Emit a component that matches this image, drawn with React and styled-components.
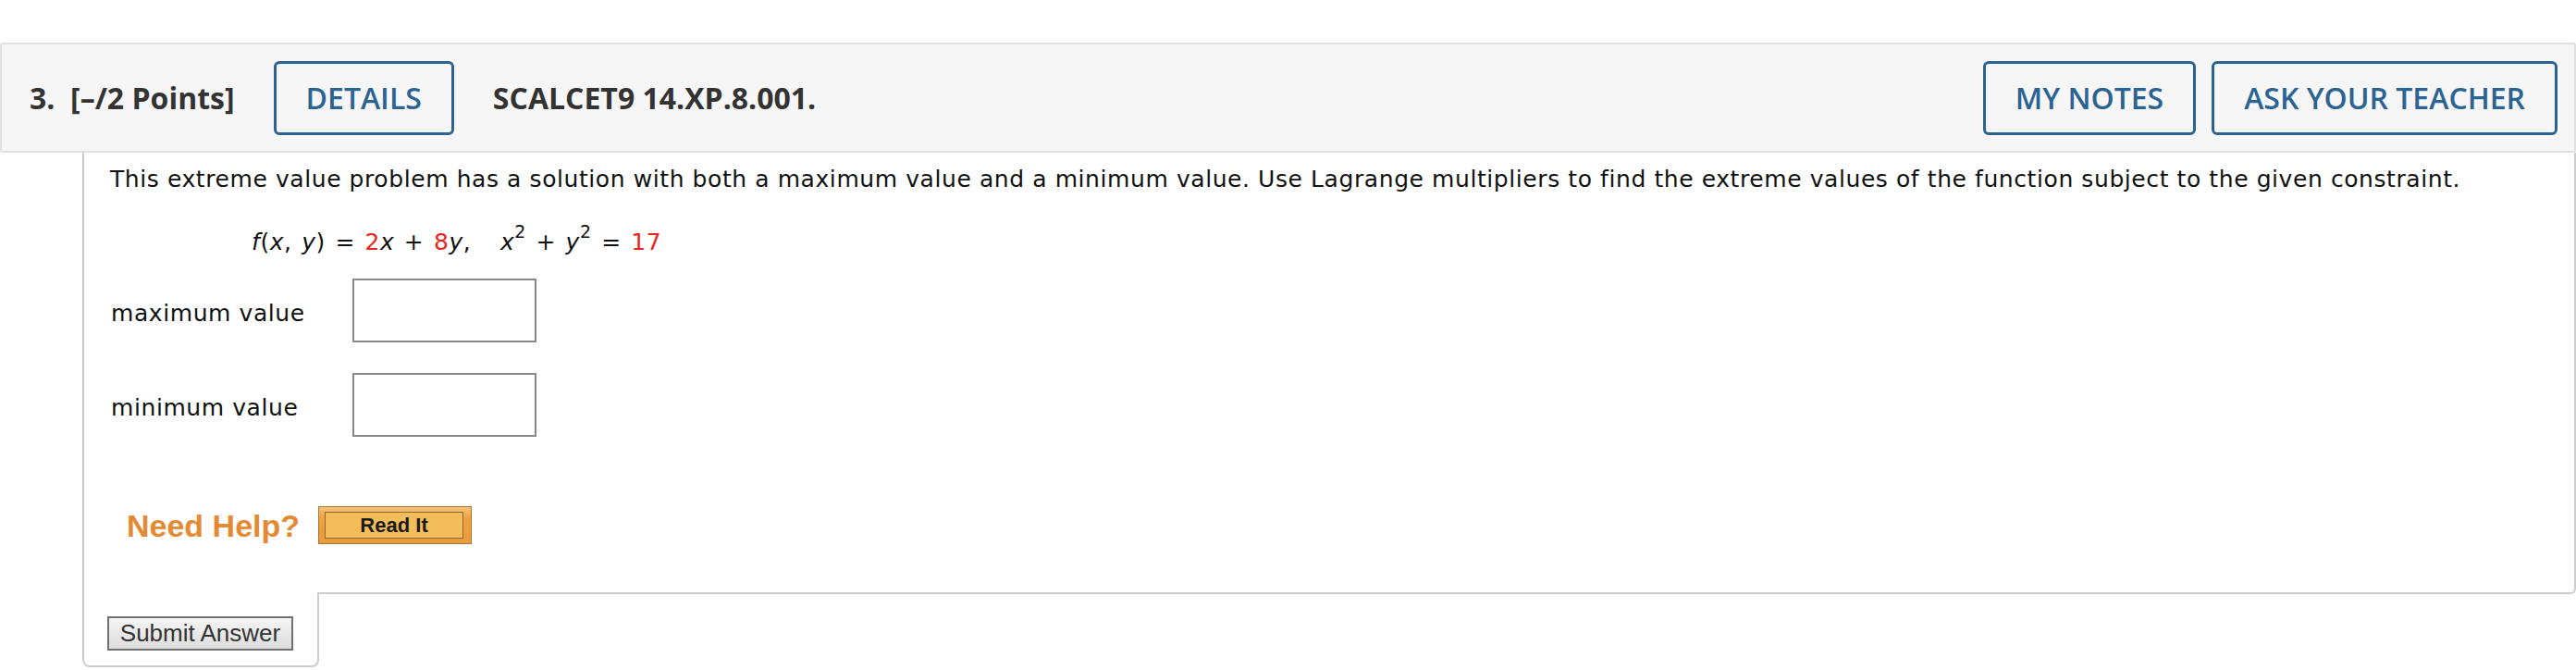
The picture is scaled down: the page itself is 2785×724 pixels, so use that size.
import React from 'react';
import styled, { createGlobalStyle } from 'styled-components';

const GlobalStyle = createGlobalStyle`
  html, body {
    margin: 0;
    padding: 0;
    background: #ffffff;
  }
`

function App() {
  return (
    <>
      <GlobalStyle />
      <Page>
        <Header>
          <Title>3.&nbsp; [–/2 Points]</Title>
          <OutlineButton>DETAILS</OutlineButton>
          <Title>SCALCET9 14.XP.8.001.</Title>
          <Spacer />
          <OutlineButton>MY NOTES</OutlineButton>
          <OutlineButton>ASK YOUR TEACHER</OutlineButton>
        </Header>

        <Body>
          <Prompt>
            This extreme value problem has a solution with both a maximum value and a minimum value. Use Lagrange multipliers to find the extreme values of the function subject to the given constraint.
          </Prompt>
          <Formula>
            <Var>f</Var>(<Var>x</Var>, <Var>y</Var>) = <Red>2</Red><Var>x</Var> + <Red>8</Red><Var>y</Var>,&nbsp;&nbsp;&nbsp;
            <Var>x</Var><Sup>2</Sup> + <Var>y</Var><Sup>2</Sup> = <Red>17</Red>
          </Formula>

          <AnswerRow>
            <Label>maximum value</Label>
            <AnswerBox type="text" />
          </AnswerRow>
          <AnswerRow $gap={33}>
            <Label>minimum value</Label>
            <AnswerBox type="text" />
          </AnswerRow>

          <HelpRow>
            <HelpText>Need Help?</HelpText>
            <ReadIt>
              <ReadItInner>Read It</ReadItInner>
            </ReadIt>
          </HelpRow>
        </Body>

        <SubmitTab>
          <SubmitButton>Submit Answer</SubmitButton>
        </SubmitTab>
      </Page>
    </>
  )
}

const Page = styled.div`
  padding-top: 46px;
  width: 2785px;
`

const Header = styled.div`
  box-sizing: border-box;
  height: 119px;
  display: flex;
  align-items: center;
  gap: 42px;
  padding: 0 18px 0 30px;
  background: #f6f6f6;
  border: 2px solid #e0e0e0;
  border-radius: 3px;
`

const Title = styled.span`
  font-family: "Open Sans", "Liberation Sans", sans-serif;
  font-weight: 700;
  font-size: 32px;
  color: #333333;
  white-space: pre;
`

const Spacer = styled.div`
  flex: 1;
`

const OutlineButton = styled.button`
  box-sizing: border-box;
  height: 80px;
  padding: 0 32px;
  background: transparent;
  border: 3px solid #2b6392;
  border-radius: 6px;
  font-family: "Open Sans", "Liberation Sans", sans-serif;
  font-weight: 600;
  font-size: 32px;
  color: #2b6392;
  cursor: pointer;

  & + & {
    margin-left: -25px;
  }
`

const Body = styled.div`
  box-sizing: border-box;
  margin-left: 89px;
  padding: 14px 28px 52px 28px;
  border: 2px solid #cccccc;
  border-top: none;
  border-bottom-right-radius: 6px;
  font-family: "DejaVu Sans", Verdana, sans-serif;
  font-size: 25px;
  line-height: 30px;
  letter-spacing: 0.58px;
  color: #111111;
`

const Prompt = styled.p`
  margin: 0;
  white-space: nowrap;
`

const Formula = styled.div`
  margin: 38px 0 0 153px;
  word-spacing: 2px;
`

const Var = styled.i`
  font-style: italic;
`

const Red = styled.span`
  color: #e8261c;
`

const Sup = styled.sup`
  font-size: 19px;
  line-height: 0;
  vertical-align: 13px;
`

const AnswerRow = styled.div`
  display: flex;
  align-items: flex-start;
  margin-top: ${p => p.$gap ?? 24}px;
  padding-left: 1px;
`

const Label = styled.span`
  width: 261px;
  margin-top: 23px;
`

const AnswerBox = styled.input`
  box-sizing: border-box;
  width: 199px;
  height: 69px;
  margin: 0;
  border: 2px solid #888888;
  background: #ffffff;
  outline: none;
`

const HelpRow = styled.div`
  display: flex;
  align-items: center;
  gap: 20px;
  margin: 75px 0 0 18px;
`

const HelpText = styled.span`
  font-family: "Liberation Sans", Arial, sans-serif;
  font-weight: 700;
  font-size: 34px;
  letter-spacing: 0;
  color: #e38a33;
`

const ReadIt = styled.div`
  box-sizing: border-box;
  width: 166px;
  height: 41px;
  padding: 5px 8px 5px 6px;
  background: linear-gradient(#f7c47a, #eea243 30%, #e99a3b);
  border: 1px solid #a8743a;
`

const ReadItInner = styled.div`
  box-sizing: border-box;
  height: 100%;
  display: flex;
  align-items: center;
  justify-content: center;
  background: #f3bd5a;
  border: 1px solid #8f6a38;
  font-family: "Liberation Sans", Arial, sans-serif;
  font-weight: 700;
  font-size: 22px;
  letter-spacing: 0;
  color: #1a1a1a;
`

const SubmitTab = styled.div`
  position: relative;
  z-index: 1;
  box-sizing: border-box;
  width: 256px;
  margin: -2px 0 0 89px;
  padding: 26px 0 16px 25px;
  background: #ffffff;
  border: 2px solid #cccccc;
  border-top: none;
  border-radius: 0 0 8px 8px;
`

const SubmitButton = styled.button`
  box-sizing: border-box;
  width: 201px;
  height: 37px;
  padding: 0;
  background: linear-gradient(#f5f5f5, #dddddd);
  border: 2px solid #707070;
  font-family: "Liberation Sans", Arial, sans-serif;
  font-size: 26px;
  color: #333333;
`

export default App
